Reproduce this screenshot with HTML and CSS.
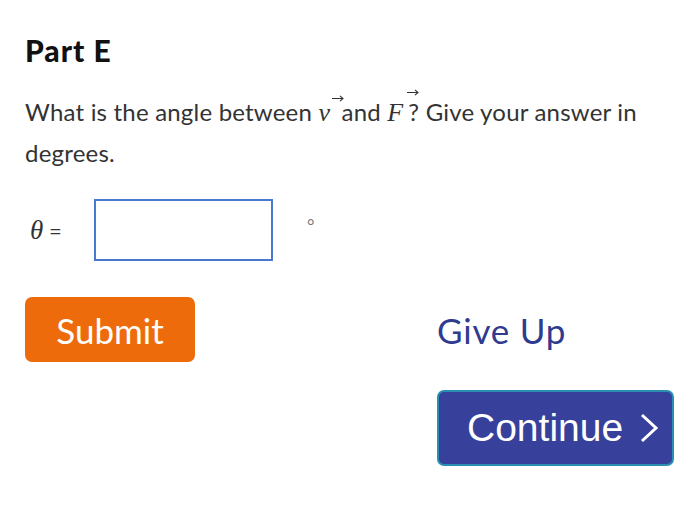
FILE: index.html
```html
<!DOCTYPE html>
<html lang="en">

<head>
    <meta charset="UTF-8">
    <title>Part E</title>
    <link rel="stylesheet" href="styles.css">
</head>

<body>
    <div class="part">
        <h2 class="part-title">Part E</h2>
        <p class="question">
            What is the angle between <span class="vec">v<svg class="vec-arrow" width="12" height="7" viewBox="0 0 12 7"><path d="M0 3.5H11M8 0.8L11 3.5L8 6.2" fill="none" stroke="#333" stroke-width="1.1" /></svg></span>
            and <span class="vec vec-f">F<svg class="vec-arrow" width="12" height="7" viewBox="0 0 12 7"><path d="M0 3.5H11M8 0.8L11 3.5L8 6.2" fill="none" stroke="#333" stroke-width="1.1" /></svg></span>? Give your answer in degrees.
        </p>

        <div class="answer-row">
            <span class="label"><span class="math">θ</span> =</span>
            <input type="text" class="answer-input">
            <span class="unit">°</span>
        </div>

        <div class="actions">
            <button class="submit-button">Submit</button>
            <a class="give-up" href="#">Give Up</a>
            <div></div>
            <button class="continue-button">
                Continue
                <svg class="chevron" width="20" height="32" viewBox="0 0 20 32">
                    <polyline points="3,3 17,16 3,29" fill="none" stroke="#fff" stroke-width="3" />
                </svg>
            </button>
        </div>
    </div>
</body>

</html>
```

FILE: styles.css
```css
body {
    margin: 0;
    font-family: Lato, "Open Sans", sans-serif;
    color: #222;
    background-color: #fff;
}

.part {
    padding: 30px 25px 0 25px;
}

.part-title {
    margin: 0;
    font-size: 30px;
    font-weight: 900;
    letter-spacing: 1px;
    line-height: 40px;
    color: #111;
}

.question {
    margin: 22px 0 0 0;
    font-size: 24px;
    letter-spacing: 0.2px;
    line-height: 40px;
    color: #333;
}

.vec {
    position: relative;
    font-family: "Liberation Serif", serif;
    font-style: italic;
    font-size: 26px;
    padding-right: 5px;
}

.vec-arrow {
    position: absolute;
    left: 14px;
    top: -3px;
}

.vec-f .vec-arrow {
    left: 20px;
    top: -9px;
}

.answer-row {
    display: flex;
    align-items: center;
    margin-top: 26px;
    padding-left: 5px;
}

.label {
    font-size: 22px;
    width: 64px;
    color: #333;
}

.math {
    font-family: "Liberation Serif", serif;
    font-style: italic;
    font-size: 27px;
}

.answer-input {
    box-sizing: border-box;
    width: 179px;
    height: 62px;
    border: 2px solid #4a78cc;
    border-radius: 0;
    outline: none;
}

.unit {
    margin-left: 34px;
    margin-top: -10px;
    font-size: 18px;
    color: #777;
}

.actions {
    display: grid;
    grid-template-columns: 412px auto;
    row-gap: 28px;
    align-items: center;
    margin-top: 36px;
}

.submit-button {
    width: 170px;
    height: 65px;
    background-color: #ee6b0c;
    color: #fff;
    font-family: Lato, sans-serif;
    font-size: 35px;
    border: none;
    border-radius: 7px;
    cursor: pointer;
}

.give-up {
    color: #2f3b8f;
    font-size: 35px;
    letter-spacing: 0.8px;
    text-decoration: none;
}

.continue-button {
    display: flex;
    align-items: center;
    width: 237px;
    height: 76px;
    background-color: #37419b;
    color: #fff;
    font-family: "Liberation Sans", Arial, sans-serif;
    font-size: 39px;
    border: 2px solid #2a8fb0;
    border-radius: 7px;
    padding: 0 0 0 28px;
    cursor: pointer;
}

.chevron {
    margin-left: 16px;
}
```
